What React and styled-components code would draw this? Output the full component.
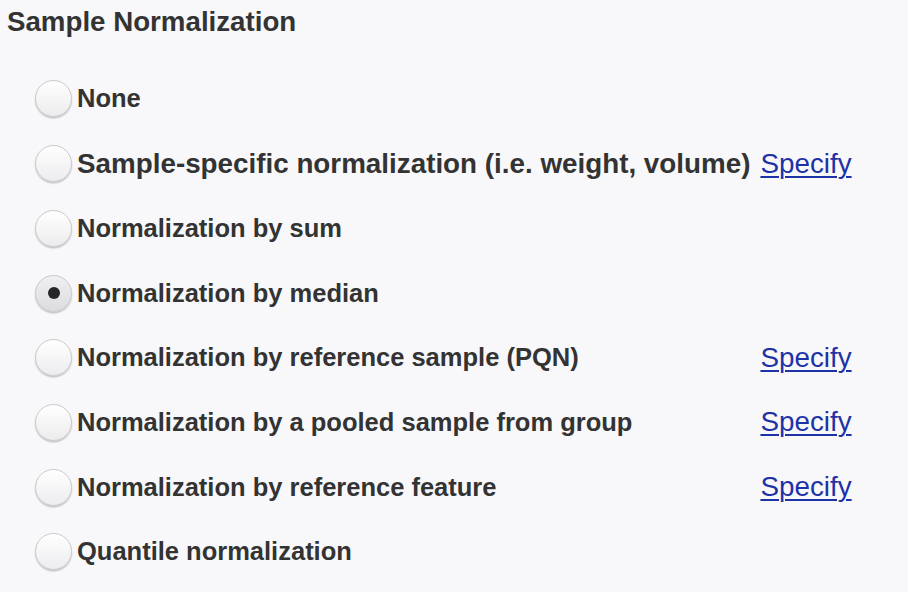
import React, { useState } from "react";
import styled, { createGlobalStyle } from "styled-components";

const GlobalStyle = createGlobalStyle`
  html, body {
    margin: 0;
    padding: 0;
    background: #f8f8fa;
  }
  body {
    font-family: "Liberation Sans", Arial, Helvetica, sans-serif;
    color: #333;
  }
`;

const options = [
  { id: "none", label: "None" },
  { id: "specific", label: "Sample-specific normalization (i.e. weight, volume)", link: true, large: true },
  { id: "sum", label: "Normalization by sum" },
  { id: "median", label: "Normalization by median" },
  { id: "pqn", label: "Normalization by reference sample (PQN)", link: true },
  { id: "pooled", label: "Normalization by a pooled sample from group", link: true },
  { id: "feature", label: "Normalization by reference feature", link: true },
  { id: "quantile", label: "Quantile normalization" },
];

export default function App() {
  const [selected, setSelected] = useState("median");

  return (
    <>
      <GlobalStyle />
      <Panel>
        <Title>Sample Normalization</Title>
        <OptionGrid>
          {options.map((o) => (
            <Row key={o.id}>
              <Radio
                type="radio"
                name="norm"
                checked={selected === o.id}
                onChange={() => setSelected(o.id)}
              />
              <Label $large={o.large} onClick={() => setSelected(o.id)}>
                {o.label}
              </Label>
              <LinkCell>{o.link && <SpecifyLink href="#">Specify</SpecifyLink>}</LinkCell>
            </Row>
          ))}
        </OptionGrid>
      </Panel>
    </>
  );
}

const Panel = styled.div`
  padding: 0 0 0 7px;
`;

const Title = styled.h2`
  margin: 0;
  height: 66.6px;
  padding-top: 5px;
  box-sizing: border-box;
  font-size: 27.7px;
  line-height: 34px;
  font-weight: bold;
  color: #333;
`;

const OptionGrid = styled.div`
  display: grid;
  grid-template-columns: 37px max-content max-content;
  grid-auto-rows: 64.7px;
  padding-left: 28px;
`;

const Row = styled.div`
  display: contents;
`;

const Radio = styled.input`
  appearance: none;
  -webkit-appearance: none;
  margin: 0;
  align-self: center;
  width: 37px;
  height: 37px;
  border-radius: 50%;
  border: 1px solid #c9c9cb;
  background: linear-gradient(#ffffff, #ececee);
  box-shadow: 0 1.5px 1.5px rgba(0, 0, 0, 0.22);
  box-sizing: border-box;
  position: relative;
  cursor: pointer;

  &:checked {
    background: linear-gradient(#f0f0f2, #dcdcde);
  }
  &:checked::after {
    content: "";
    position: absolute;
    left: 50%;
    top: 50%;
    width: 12px;
    height: 12px;
    margin: -6px 0 0 -6px;
    border-radius: 50%;
    background: #262628;
  }
`;

const Label = styled.span`
  align-self: center;
  padding-left: 5px;
  font-size: ${(p) => (p.$large ? "27.8px" : "25.5px")};
  font-weight: bold;
  color: #333;
  white-space: nowrap;
  cursor: default;
`;

const LinkCell = styled.span`
  align-self: center;
  padding-left: 10px;
`;

const SpecifyLink = styled.a`
  font-size: 27.8px;
  color: #1e32a8;
  text-decoration: underline;
  text-decoration-thickness: 2px;
  text-underline-offset: 3px;
`;
